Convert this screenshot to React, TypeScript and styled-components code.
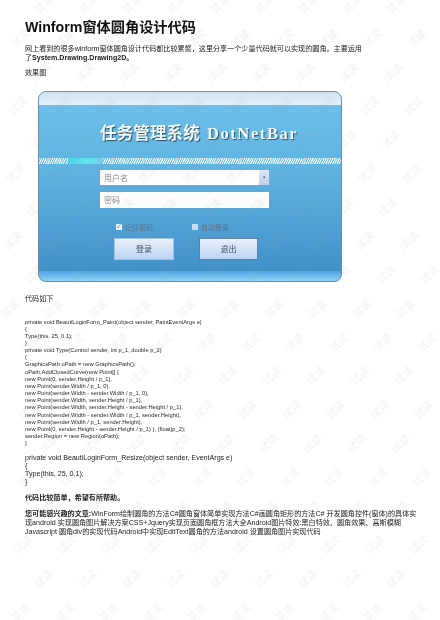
import React from "react";
import styled, { createGlobalStyle } from "styled-components";

const Global = createGlobalStyle`
  html, body { margin: 0; padding: 0; background: #fff; }
  body { font-family: "Liberation Sans", "Noto Sans CJK SC", sans-serif; color: #222; }
`;

const Page = styled.main`
  position: relative;
  width: 440px;
  height: 620px;
  overflow: hidden;
  box-sizing: border-box;
  padding: 18px 0 0 25px;
  background: #fff;
  filter: blur(0.3px);
`;

const Title = styled.h1`
  margin: 0 0 9px;
  font-size: 14.2px;
  line-height: 18px;
  font-weight: 700;
  color: #111;
`;

const Para = styled.p<{ $after?: number }>`
  margin: 0 0 ${(p) => p.$after ?? 6}px;
  font-size: 7.1px;
  line-height: 9px;
  white-space: nowrap;
`;

const LoginShot = styled.div`
  display: flex;
  flex-direction: column;
  width: 304px;
  height: 191px;
  margin: 0 0 13px 13px;
  box-sizing: border-box;
  border: 1px solid #6d8ea6;
  border-radius: 8px;
  overflow: hidden;
  background: linear-gradient(#6dc1ea 0%, #60b4e2 40%, #3f8dc6 100%);
`;

const TopBand = styled.div`
  height: 13px;
  flex: none;
  background: linear-gradient(#cfe2f1, #e4f1fa);
`;

const ShotBody = styled.div`
  flex: 1;
  display: flex;
  flex-direction: column;
`;

const BottomBand = styled.div`
  height: 10px;
  flex: none;
  background: linear-gradient(#4da5e2, #8fd4f6);
`;

const ShotTitle = styled.div`
  margin: 18px 0 13px 61px;
  height: 22px;
  font-family: "Liberation Serif", "Noto Sans CJK SC", serif;
  font-size: 16.5px;
  line-height: 22px;
  font-weight: 700;
  letter-spacing: 0.15px;
  color: #f7f9fa;
  white-space: nowrap;
  text-shadow: 1px 1px 1px #24506c;
`;

const Latin = styled.span`
  letter-spacing: 1.6px;
  margin-left: 7px;
`;

const StripeRow = styled.div`
  display: flex;
  height: 6px;
  flex: none;
`;

const Hatch = styled.div<{ $grow?: boolean }>`
  width: ${(p) => (p.$grow ? "auto" : "29px")};
  flex: ${(p) => (p.$grow ? 1 : "none")};
  background: repeating-linear-gradient(115deg, rgba(255, 255, 255, 0.85) 0 1px, rgba(255, 255, 255, 0.2) 1px 2px);
`;

const Glow = styled.div`
  width: 35px;
  flex: none;
  background: linear-gradient(90deg, #52cfe8, #5fe6ee 55%, #7cc8e8);
`;

const Field = styled.div`
  display: flex;
  align-items: center;
  justify-content: space-between;
  box-sizing: border-box;
  width: 169px;
  height: 15.5px;
  margin: 0 0 7px 61px;
  padding-left: 4px;
  background: #fdfdfd;
  font-size: 8px;
  color: #8a8a8a;
  flex: none;
`;

const FirstField = styled(Field)`
  margin-top: 6px;
`;

const DropButton = styled.div`
  width: 10px;
  height: 100%;
  display: flex;
  align-items: center;
  justify-content: center;
  background: linear-gradient(#dfe9f8, #bcd0ec);
  color: #274b80;
  font-size: 6px;
  line-height: 1;
`;

const Checks = styled.div`
  display: flex;
  align-items: center;
  margin: 7px 0 0 77px;
  height: 10px;
`;

const Check = styled.div`
  display: flex;
  align-items: center;
  gap: 3px;
  width: 76px;
  font-size: 7px;
  color: #5f748a;
  white-space: nowrap;
`;

const Box = styled.span<{ $on?: boolean }>`
  width: 6px;
  height: 6px;
  display: inline-flex;
  align-items: center;
  justify-content: center;
  background: ${(p) => (p.$on ? "#eef1f6" : "#c9dcee")};
  color: #3a4a66;
  font-size: 5px;
  line-height: 1;
`;

const Buttons = styled.div`
  display: flex;
  align-items: center;
  gap: 25px;
  margin: 6px 0 0 75px;
`;

const ShotButton = styled.div<{ $focus?: boolean }>`
  box-sizing: border-box;
  width: ${(p) => (p.$focus ? "59px" : "60px")};
  height: 22px;
  display: flex;
  align-items: center;
  justify-content: center;
  background: linear-gradient(#eaf2fc, #bcd3f2);
  border: ${(p) => (p.$focus ? "1.5px solid #5e7fa8" : "1px solid #9fc4e6")};
  font-size: 8px;
  color: #3d4f66;
`;

const CodeBlock = styled.pre`
  margin: 15px 0 7px;
  font-family: inherit;
  font-size: 5.75px;
  line-height: 7.15px;
  color: #2a2a2a;
`;

const LargeCode = styled.pre`
  margin: 0 0 8px;
  font-family: inherit;
  font-size: 7.1px;
  line-height: 8px;
  color: #222;
`;

const Related = styled.p`
  margin: 0;
  font-size: 7.1px;
  line-height: 8.6px;
  white-space: nowrap;
`;

const Strong = styled.b`
  font-weight: 700;
`;

const Marks = styled.div`
  position: absolute;
  inset: 0;
  pointer-events: none;
`;

const Mark = styled.span`
  position: absolute;
  font-size: 11px;
  line-height: 1;
  font-weight: 500;
  color: rgba(165, 165, 165, 0.13);
  white-space: nowrap;
  transform: translate(-50%, -50%) rotate(-42deg);
`;

const marks: { x: number; y: number }[] = [];
for (let k = 0; k < 19; k++) {
  const offset = (352 + k * 20.7) % 44;
  for (let x = offset; x < 440; x += 44) {
    if (x > 8 && x < 432) marks.push({ x, y: 5 + k * 33.75 });
  }
}

const codeA = `private void BeautiLoginForm_Paint(object sender, PaintEventArgs e)
{
Type(this, 25, 0.1);
}
private void Type(Control sender, int p_1, double p_2)
{
GraphicsPath oPath = new GraphicsPath();
oPath.AddClosedCurve(new Point[] {
new Point(0, sender.Height / p_1),
new Point(sender.Width / p_1, 0),
new Point(sender.Width - sender.Width / p_1, 0),
new Point(sender.Width, sender.Height / p_1),
new Point(sender.Width, sender.Height - sender.Height / p_1),
new Point(sender.Width - sender.Width / p_1, sender.Height),
new Point(sender.Width / p_1, sender.Height),
new Point(0, sender.Height - sender.Height / p_1) }, (float)p_2);
sender.Region = new Region(oPath);
}`;

const codeB = `private void BeautiLoginForm_Resize(object sender, EventArgs e)
{
Type(this, 25, 0.1);
}`;

export default function App() {
  return (
    <Page>
      <Global />
      <Title>Winform窗体圆角设计代码</Title>
      <Para $after={6}>
        网上看到的很多winform窗体圆角设计代码都比较累赘，这里分享一个少量代码就可以实现的圆角。主要运用
        <br />了<Strong>System.Drawing.Drawing2D。</Strong>
      </Para>
      <Para $after={12.5}>效果图</Para>
      <LoginShot>
        <TopBand />
        <ShotBody>
          <ShotTitle>
            任务管理系统<Latin>DotNetBar</Latin>
          </ShotTitle>
          <StripeRow>
            <Hatch />
            <Glow />
            <Hatch $grow />
          </StripeRow>
          <FirstField>
            用户名
            <DropButton>▪</DropButton>
          </FirstField>
          <Field>密码</Field>
          <Checks>
            <Check>
              <Box $on>✓</Box>记住密码
            </Check>
            <Check>
              <Box />自动登录
            </Check>
          </Checks>
          <Buttons>
            <ShotButton>登录</ShotButton>
            <ShotButton $focus>退出</ShotButton>
          </Buttons>
        </ShotBody>
        <BottomBand />
      </LoginShot>
      <Para $after={0}>代码如下</Para>
      <CodeBlock>{codeA}</CodeBlock>
      <LargeCode>{codeB}</LargeCode>
      <Para $after={7}>
        <Strong>代码比较简单，希望有所帮助。</Strong>
      </Para>
      <Related>
        <Strong>您可能感兴趣的文章:</Strong>WinForm绘制圆角的方法C#圆角窗体简单实现方法C#画圆角矩形的方法C# 开发圆角控件(窗体)的具体实
        <br />
        现android 实现圆角图片解决方案CSS+Jquery实现页面圆角框方法大全Android图片特效:黑白特效、圆角效果、高斯模糊
        <br />
        Javascript 圆角div的实现代码Android中实现EditText圆角的方法android 设置圆角图片实现代码
      </Related>
      <Marks>
        {marks.map((m, i) => (
          <Mark key={i} style={{ left: m.x, top: m.y }}>
            试读
          </Mark>
        ))}
      </Marks>
    </Page>
  );
}
